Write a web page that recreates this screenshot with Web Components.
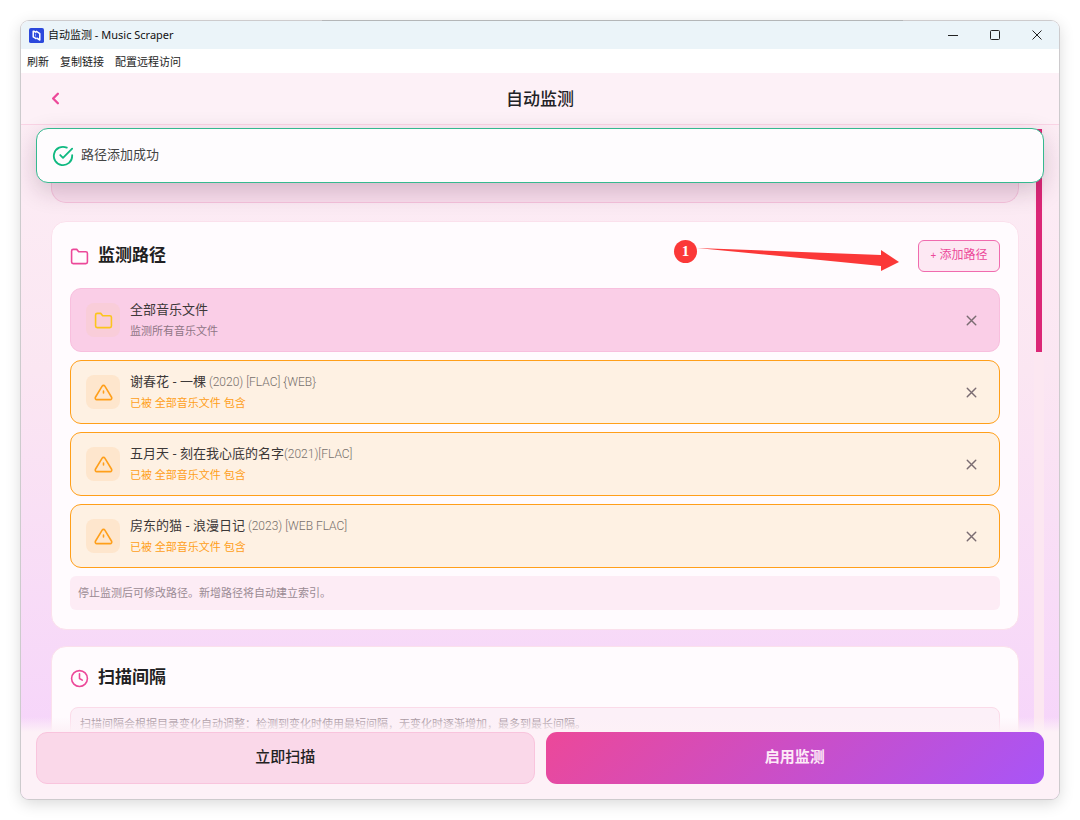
<!DOCTYPE html>
<html lang="zh-CN">
<head>
<meta charset="utf-8">
<title>自动监测 - Music Scraper</title>
<style>
  html { height: 100%; }
  body {
    margin: 0;
    min-height: 100%;
    background: #fff;
    font-family: "Noto Sans", "Noto Sans CJK SC", sans-serif;
    color: #1f1f23;
    --pink: #ec4899;
    --pink-line: #fbd0e3;
    --amber: #ff9f1a;
    --muted: #9a8a93;
  }
</style>
</head>
<body>
<app-window>
  <title-bar slot="title">自动监测 - Music Scraper</title-bar>
  <menu-bar slot="menu"></menu-bar>
  <page-header slot="header">自动监测</page-header>
  <toast-message slot="toast">路径添加成功</toast-message>

  <panel-card cut></panel-card>
  <panel-card>
    <ui-icon slot="icon" name="folder"></ui-icon>
    <span slot="title">监测路径</span>
    <add-button slot="action">添加路径</add-button>
    <path-item kind="root">
      <span slot="name">全部音乐文件</span>
      <span slot="note">监测所有音乐文件</span>
    </path-item>
    <path-item kind="warn">
      <span slot="name">谢春花 - 一棵</span><span slot="tag">&nbsp;(2020) [FLAC] {WEB}</span>
      <span slot="note">已被 全部音乐文件 包含</span>
    </path-item>
    <path-item kind="warn">
      <span slot="name">五月天 - 刻在我心底的名字</span><span slot="tag">(2021)[FLAC]</span>
      <span slot="note">已被 全部音乐文件 包含</span>
    </path-item>
    <path-item kind="warn">
      <span slot="name">房东的猫 - 浪漫日记</span><span slot="tag">&nbsp;(2023) [WEB FLAC]</span>
      <span slot="note">已被 全部音乐文件 包含</span>
    </path-item>
    <hint-box>停止监测后可修改路径。新增路径将自动建立索引。</hint-box>
  </panel-card>
  <panel-card>
    <ui-icon slot="icon" name="clock"></ui-icon>
    <span slot="title">扫描间隔</span>
    <hint-box outlined>扫描间隔会根据目录变化自动调整：检测到变化时使用最短间隔，无变化时逐渐增加，最多到最长间隔。</hint-box>
  </panel-card>

  <action-bar slot="actions"></action-bar>
  <callout-arrow slot="callout">1</callout-arrow>
</app-window>

<script>
const define = (name, html, setup) => {
  const template = document.createElement('template');
  template.innerHTML = '<style>*{box-sizing:border-box}button{font-family:inherit;cursor:pointer;margin:0}</style>' + html;
  customElements.define(name, class extends HTMLElement {
    constructor() {
      super();
      this.attachShadow({ mode: 'open' }).appendChild(template.content.cloneNode(true));
    }
    connectedCallback() { if (setup) setup(this, this.shadowRoot); }
  });
};

const ICONS = {
  folder: '<path d="M22 19a2 2 0 0 1-2 2H4a2 2 0 0 1-2-2V5a2 2 0 0 1 2-2h4.500l2.500 3H20a2 2 0 0 1 2 2z"/>',
  clock: '<circle cx="12" cy="12" r="10"/><path d="M12 6v6l3.500 2"/>',
  warn: '<path d="M10.300 3.900 1.800 18a2 2 0 0 0 1.700 3h17a2 2 0 0 0 1.700-3L13.700 3.900a2 2 0 0 0-3.400 0z"/><path d="M12 10v2.500"/>',
  close: '<path d="M18 6 6 18M6 6l12 12"/>',
  back: '<path d="m15 18-6-6 6-6" stroke-width="3"/>',
  check: '<path d="M22 11.100V12a10 10 0 1 1-5.900-9.100"/><path d="M22 4 12 14l-3-3"/>'
};

define('ui-icon', `
  <style>
    :host { display: block; width: 19px; height: 19px; color: var(--pink); }
    svg { display: block; width: 100%; height: 100%; fill: none; stroke: currentColor; stroke-width: 2; stroke-linecap: round; stroke-linejoin: round; }
  </style>
  <svg viewBox="0 0 24 24" aria-hidden="true"></svg>`,
  (el, root) => { root.querySelector('svg').innerHTML = ICONS[el.getAttribute('name')] || ''; });

define('app-window', `
  <style>
    :host { display: block; padding: 21px; box-sizing: border-box; }
    .frame {
      position: relative; display: flex; flex-direction: column;
      height: calc(100vh - 42px); min-height: 480px; overflow: hidden;
      border-radius: 8px;
      background: linear-gradient(180deg, #fdf0f6 0, #fbe6f2 45%, #f6d5fa 92%);
    }
    .shell { position: relative; border-radius: 8px; box-shadow: 0 0 0 1px #cdcbcd, 0 4px 16px rgba(0,0,0,.16); }
    .shell::before { content: ""; position: absolute; top: -1px; left: 29%; right: 15%; height: 1px; background: #b4b6b8; }
    .view { position: relative; flex: 1; min-height: 0; display: flex; }
    .scroll { flex: 1; min-width: 0; overflow: hidden; padding: 4px 15px 0 30px; display: flex; flex-direction: column; gap: 16px; }
    .rail { width: 10px; margin: 4px 15px 0 0; background: #fce7f1; display: flex; justify-content: center; align-items: flex-start; }
    .thumb { width: 6px; height: 37%; background: #db2777; }
    .toast { position: absolute; z-index: 2; top: 3px; left: 15px; right: 15px; }
  </style>
  <div class="shell"><div class="frame">
    <slot name="title"></slot>
    <slot name="menu"></slot>
    <slot name="header"></slot>
    <div class="view">
      <div class="scroll"><slot></slot></div>
      <div class="rail"><div class="thumb"></div></div>
      <div class="toast"><slot name="toast"></slot></div>
    </div>
    <slot name="actions"></slot>
    <slot name="callout"></slot>
  </div></div>`);

define('title-bar', `
  <style>
    :host { display: flex; align-items: center; height: 28px; padding: 0 1px 0 8px; gap: 4px; background: #ebf4f9; font-size: 11px; color: #111; flex: none; }
    .logo { width: 15px; height: 15px; flex: none; }
    .title { flex: 1; line-height: 16px; }
    button { width: 42px; height: 28px; padding: 0; border: 0; background: none; display: grid; place-items: center; }
    .controls { display: flex; }
    .controls svg { width: 12px; height: 12px; fill: none; stroke: #222; stroke-width: 1; }
  </style>
  <svg class="logo" viewBox="0 0 16 16" aria-hidden="true">
    <rect width="16" height="16" rx="2" fill="#2b48dc"/>
    <path d="M4.500 3v6.500l3.500 2.200M4.500 3 8 4.800" fill="none" stroke="#fff" stroke-width="1.600" stroke-linejoin="round"/>
    <path d="M7.500 3.200 11.500 6v6.800L8 10.500" fill="none" stroke="#fff" stroke-width="1.600" stroke-linejoin="round"/>
    <path d="M7 6v3" stroke="#9db0ff" stroke-width="1"/>
  </svg>
  <span class="title"><slot></slot></span>
  <div class="controls">
    <button aria-label="最小化"><svg viewBox="0 0 12 12"><path d="M1 6.500h10"/></svg></button>
    <button aria-label="最大化"><svg viewBox="0 0 12 12"><rect x="1.500" y="1.500" width="9" height="9" rx="1"/></svg></button>
    <button aria-label="关闭"><svg viewBox="0 0 12 12"><path d="m1.500 1.500 9 9m0-9-9 9"/></svg></button>
  </div>`);

define('menu-bar', `
  <style>
    :host { display: flex; align-items: center; height: 24px; padding: 2px 6px 0; box-sizing: border-box; gap: 11px; background: #fff; flex: none; }
    button { padding: 0; border: 0; background: none; font-size: 11px; line-height: 16px; color: #222; }
  </style>
  <button>刷新</button><button>复制链接</button><button>配置远程访问</button>`);

define('page-header', `
  <style>
    :host { display: grid; grid-template-columns: 40px 1fr 40px; align-items: center; height: 52px; padding: 0 14px; box-sizing: border-box; border-bottom: 1px solid #fad4e5; background: #fdf1f7; flex: none; }
    button { width: 40px; height: 40px; padding: 0; border: 0; background: none; display: grid; place-items: center; }
    h1 { margin: 0; text-align: center; font-size: 17px; line-height: 24px; font-weight: 500; color: #222226; }
  </style>
  <button aria-label="返回"><ui-icon name="back"></ui-icon></button>
  <h1><slot></slot></h1>`);

define('toast-message', `
  <style>
    :host { display: flex; align-items: center; gap: 7px; height: 55px; padding: 0 15px; box-sizing: border-box; border: 1px solid #35b98f; border-radius: 12px; background: #fefcfe; box-shadow: 0 8px 24px rgba(60,20,50,.2); font-size: 13px; line-height: 20px; color: #444; }
    ui-icon { width: 22px; height: 22px; color: #10b981; }
    p { margin: 0; padding-bottom: 3px; }
  </style>
  <ui-icon name="check"></ui-icon><p role="status"><slot></slot></p>`);

define('panel-card', `
  <style>
    :host { display: block; flex: none; box-sizing: border-box; padding: 18px 18px 19px; border: 1px solid #fbe0ec; border-radius: 15px; background: #fffbfe; }
    :host([cut]) { height: 74px; margin-bottom: 2px; border-color: #f5c3dc; border-top: 0; border-radius: 0 0 15px 15px; background: #f9deed; }
    header { display: flex; align-items: center; gap: 9px; min-height: 26px; margin-bottom: 16px; }
    h2 { flex: 1; margin: 0; padding-bottom: 2px; font-size: 17px; line-height: 24px; font-weight: 600; }
    .body { display: flex; flex-direction: column; gap: 8px; }
  </style>
  <header><slot name="icon"></slot><h2><slot name="title"></slot></h2><slot name="action"></slot></header>
  <div class="body"><slot></slot></div>`,
  (el, root) => { if (el.hasAttribute('cut')) root.querySelectorAll('header,.body').forEach(n => n.remove()); });

define('add-button', `
  <style>
    :host { display: block; }
    button { width: 82px; height: 32px; padding: 0 0 2px; border: 1px solid #f06bae; border-radius: 6px; background: #fde8f3; color: var(--pink); font-size: 12px; line-height: 20px; }
    .plus { font-size: 10px; }
  </style>
  <button><span class="plus">+</span> <slot></slot></button>`);

define('path-item', `
  <style>
    :host { display: flex; align-items: center; gap: 10px; height: 64px; padding: 0 14px 0 15px; box-sizing: border-box; border: 1px solid var(--amber); border-radius: 11px; background: #fef1e3; }
    :host([kind="root"]) { border-color: #f8bfde; background: #facee7; }
    .badge { width: 34px; height: 34px; flex: none; border-radius: 8px; display: grid; place-items: center; background: #fee6cd; }
    :host([kind="root"]) .badge { background: #f9cdd9; }
    .badge ui-icon { color: var(--amber); }
    :host([kind="root"]) .badge ui-icon { color: #fcc51c; }
    .text { flex: 1; min-width: 0; padding-bottom: 2px; }
    p { margin: 0; white-space: nowrap; }
    .name { font-size: 13px; line-height: 22px; color: #3c3838; }
    .tag { font-family: "Roboto", "Noto Sans", sans-serif; font-size: 12px; font-weight: 300; color: #77706c; }
    .note { font-size: 11px; line-height: 20px; color: var(--amber); }
    :host([kind="root"]) .note { color: #8f7585; }
    button { width: 28px; height: 28px; padding: 0; border: 0; background: none; display: grid; place-items: center; }
    button ui-icon { width: 17px; height: 17px; color: #7a6c72; }
  </style>
  <div class="badge"><ui-icon></ui-icon></div>
  <div class="text">
    <p class="name"><slot name="name"></slot><span class="tag"><slot name="tag"></slot></span></p>
    <p class="note"><slot name="note"></slot></p>
  </div>
  <button aria-label="移除路径"><ui-icon name="close"></ui-icon></button>`,
  (el, root) => {
    const icon = root.querySelector('.badge ui-icon');
    const kind = el.getAttribute('kind') === 'root' ? 'folder' : 'warn';
    icon.setAttribute('name', kind);
    icon.shadowRoot.querySelector('svg').innerHTML = ICONS[kind];
  });

define('hint-box', `
  <style>
    :host { display: block; padding: 7px 8px; border-radius: 6px; background: #fdecf5; font-size: 11px; line-height: 20px; color: var(--muted); white-space: nowrap; overflow: hidden; }
    :host([outlined]) { padding: 6px 9px 24px; border: 1px solid #fbdbe9; border-radius: 8px; background: #fcf0f8; }
  </style>
  <slot></slot>`);

define('action-bar', `
  <style>
    :host { position: relative; z-index: 1; display: grid; grid-template-columns: 1fr 1fr; gap: 11px; flex: none; margin-top: -15px; padding: 15px; background: linear-gradient(180deg, rgba(253,241,247,0) 0, #fdf1f7 15px); }
    button { height: 52px; padding: 0 16px 4px; border: 1px solid #f9c4dd; border-radius: 11px; background: #fad8e9; font-size: 15px; line-height: 20px; font-weight: 500; color: #222; }
    .primary { border: 0; background: linear-gradient(135deg, #ec4899, #a855f7); color: #fdeaf7; font-weight: 700; }
  </style>
  <button>立即扫描</button><button class="primary">启用监测</button>`);

define('callout-arrow', `
  <style>
    :host { position: absolute; z-index: 3; top: 219px; right: 159px; display: flex; align-items: flex-start; pointer-events: none; font-family: "Liberation Serif", serif; }
    .dot { width: 23px; height: 23px; border-radius: 50%; background: #fb3838; color: #fff; text-align: center; font-size: 15px; line-height: 23px; font-weight: 700; }
    svg { display: block; width: 203px; height: 32px; }
  </style>
  <span class="dot"><slot></slot></span>
  <svg viewBox="0 0 203 32" aria-hidden="true"><path d="M0 8 184 15V10l18 12-18 9v-5z" fill="#fb3838"/></svg>`);
</script>
</body>
</html>
